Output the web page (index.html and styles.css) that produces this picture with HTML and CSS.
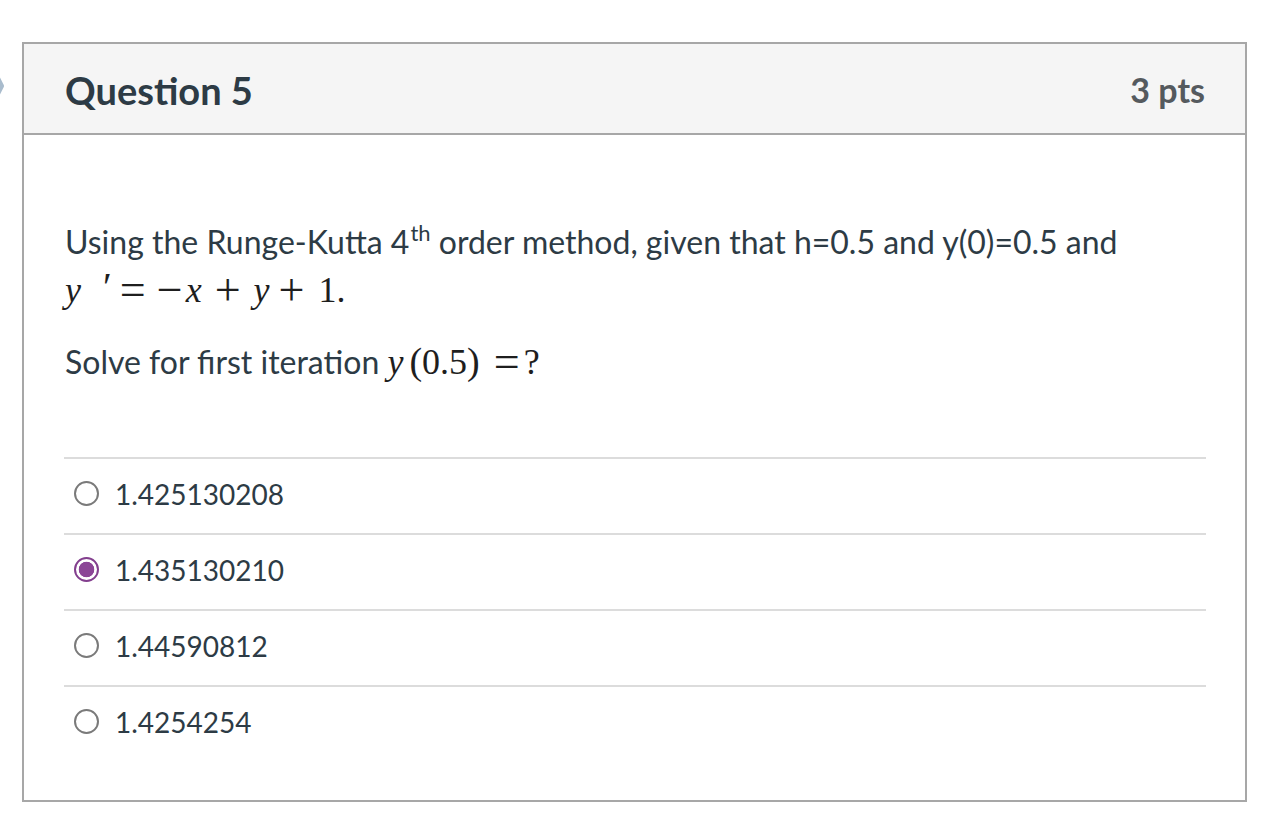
FILE: index.html
```html
<!DOCTYPE html>
<html>
<head>
<meta charset="utf-8">
<link rel="stylesheet" href="styles.css">
</head>
<body>
<svg class="edge-arrow" width="8" height="22" viewBox="0 0 8 22"><path d="M0 3 L4 11 L0 19" fill="none" stroke="#a9bccd" stroke-width="4" stroke-linecap="round" stroke-linejoin="round"/></svg>
<div class="page">
  <div class="card">
    <div class="header">
      <span class="title">Question 5</span>
      <span class="pts">3 pts</span>
    </div>
    <div class="content">
      <div class="question">
        <p class="para">Using the Runge-Kutta 4<sup class="sup">th</sup> order method, given that h=0.5 and y(0)=0.5 and<br><span class="math"><i>y</i><span class="prime">′</span><span class="op rel">=</span><span class="op neg">−</span><i class="mx">x</i><span class="op bin1">+</span><i class="my">y</i><span class="op bin2">+</span><span class="one">1.</span></span></p>
        <p class="para">Solve for first iteration <span class="math q2"><i>y</i><span class="paren lp">(</span>0.5<span class="paren">)</span><span class="op rel2">=</span>?</span></p>
      </div>
      <div class="answers">
        <div class="answer"><span class="radio"></span><span class="label">1.425130208</span></div>
        <div class="answer"><span class="radio checked"></span><span class="label">1.435130210</span></div>
        <div class="answer"><span class="radio"></span><span class="label">1.44590812</span></div>
        <div class="answer"><span class="radio"></span><span class="label">1.4254254</span></div>
      </div>
    </div>
  </div>
</div>
</body>
</html>
```

FILE: styles.css
```css
html, body {
  margin: 0;
  padding: 0;
  background: #ffffff;
}
body {
  font-family: Lato, "Liberation Sans", sans-serif;
  color: #2d3b45;
}
.edge-arrow {
  position: absolute;
  left: -2px;
  top: 75px;
}
.page {
  padding: 42px 0 0 22px;
}
.card {
  width: 1221px;
  height: 756px;
  border: 2px solid #a7a7a7;
}
.header {
  height: 89px;
  background: #f5f5f5;
  border-bottom: 2px solid #a7a7a7;
  display: flex;
  align-items: center;
  justify-content: space-between;
  padding: 0 40px 0 41px;
}
.title {
  font-weight: 700;
  font-size: 38px;
  color: #2d3b45;
  padding-top: 2px;
}
.pts {
  font-weight: 700;
  font-size: 34px;
  color: #555a5e;
  padding-top: 2px;
}
.content {
  padding: 83px 39px 0 40px;
}
.question {
  display: flex;
  flex-direction: column;
  gap: 23px;
}
.para {
  margin: 0 0 0 1px;
  font-size: 32px;
  line-height: 48px;
}
.sup {
  font-size: 22px;
  line-height: 0;
  vertical-align: 13px;
  margin-left: 1px;
}
.math {
  font-family: "Liberation Serif", "DejaVu Serif", serif;
  font-size: 36px;
  color: #1e1e1e;
}
.math i {
  font-style: italic;
}
.op {
  font-size: 46px;
  line-height: 0;
  vertical-align: -3px;
}
.prime {
  margin-left: 22px;
  font-size: 40px;
  line-height: 0;
  vertical-align: 2px;
}
.rel {
  margin: 0 11px 0 8px;
}
.neg {
  margin-right: 3px;
}
.mx {
  margin-right: 13px;
}
.bin1 {
  margin-right: 13px;
}
.my {
  margin-right: 9px;
}
.bin2 {
  margin-right: 13px;
}
.one {
  margin-left: 1px;
}
.q2 {
  margin-left: 0;
}
.lp {
  margin-left: 6px;
}
.paren {
  font-size: 38px;
}
.rel2 {
  margin-left: 14px;
  margin-right: 4px;
}
.answers {
  margin-top: 71px;
}
.answer {
  border-top: 2px solid #dcdcdc;
  display: flex;
  align-items: center;
  padding-bottom: 6px;
  box-sizing: border-box;
  height: 76px;
}
.radio {
  width: 21px;
  height: 21px;
  border: 2px solid #7a7a7a;
  border-radius: 50%;
  margin-left: 10px;
  margin-right: 16px;
  background: #fff;
  flex: none;
}
.radio.checked {
  border-color: #833f8e;
  background: radial-gradient(circle, #8b4596 0 7.5px, #ffffff 8.1px);
}
.label {
  font-size: 28px;
  color: #2d3b45;
  padding-top: 1px;
}
```
